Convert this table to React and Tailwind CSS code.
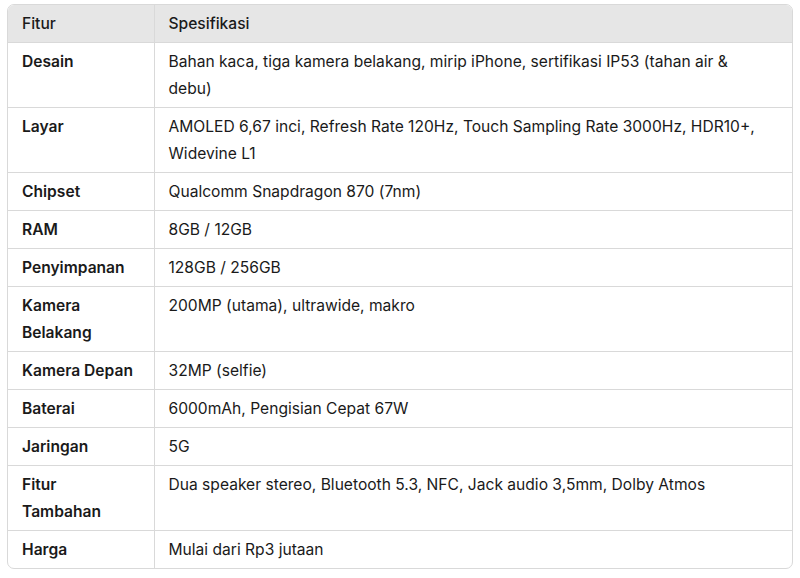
export default function App() {
  const rows = [
    ["Desain", "Bahan kaca, tiga kamera belakang, mirip iPhone, sertifikasi IP53 (tahan air & debu)"],
    ["Layar", "AMOLED 6,67 inci, Refresh Rate 120Hz, Touch Sampling Rate 3000Hz, HDR10+, Widevine L1"],
    ["Chipset", "Qualcomm Snapdragon 870 (7nm)"],
    ["RAM", "8GB / 12GB"],
    ["Penyimpanan", "128GB / 256GB"],
    ["Kamera Belakang", "200MP (utama), ultrawide, makro"],
    ["Kamera Depan", "32MP (selfie)"],
    ["Baterai", "6000mAh, Pengisian Cepat 67W"],
    ["Jaringan", "5G"],
    ["Fitur Tambahan", "Dua speaker stereo, Bluetooth 5.3, NFC, Jack audio 3,5mm, Dolby Atmos"],
    ["Harga", "Mulai dari Rp3 jutaan"],
  ];
  return (
    <div className="bg-white w-[800px] h-[578px] pt-[4px] pl-[7px]" style={{ fontFamily: "Inter, 'Noto Sans', sans-serif" }}>
      <div className="w-[786px] border border-[#d9d9d9] rounded-[7px] overflow-hidden">
        <table className="w-full border-collapse table-fixed text-[15.6px] leading-[27px] text-[#1a1a1a]">
          <thead>
            <tr className="bg-[#e6e6e6]">
              <th className="w-[146px] text-left font-medium pl-[14px] pr-[17px] py-[5px] border-r border-[#d9d9d9]">Fitur</th>
              <th className="text-left font-medium pl-[14px] pr-[22px] py-[5px]">Spesifikasi</th>
            </tr>
          </thead>
          <tbody>
            {rows.map(([a, b]) => (
              <tr key={a} className="border-t border-[#d9d9d9] align-top">
                <td className="font-semibold pl-[14px] pr-[17px] py-[5px] border-r border-[#d9d9d9]">{a}</td>
                <td className="pl-[14px] pr-[22px] py-[5px]">{b}</td>
              </tr>
            ))}
          </tbody>
        </table>
      </div>
    </div>
  );
}
